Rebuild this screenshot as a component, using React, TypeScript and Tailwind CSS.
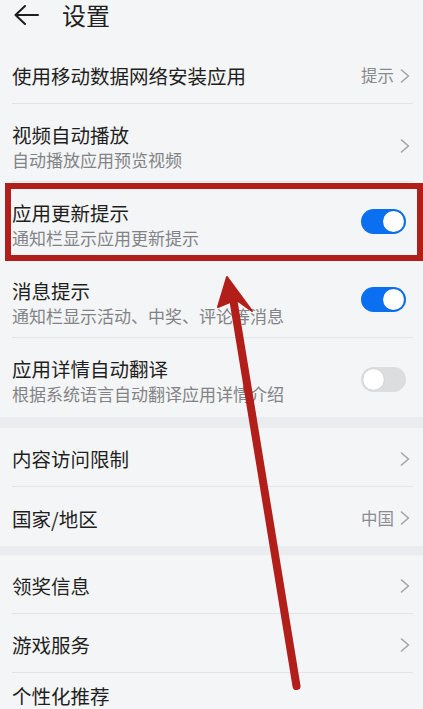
import type { ReactNode } from "react";

function Chevron() {
  return (
    <svg width="10" height="14" viewBox="0 0 10 14" fill="none" className="shrink-0">
      <path d="M1.5 1 L8.5 7 L1.5 13" stroke="#a3a4a6" strokeWidth={1.6} strokeLinecap="round" strokeLinejoin="round" />
    </svg>
  );
}

function Toggle({ on }: { on: boolean }) {
  return (
    <div
      className={`w-[45px] h-[25px] rounded-full p-[2px] flex shrink-0 ${
        on ? "bg-[#0a6ff0] justify-end" : "bg-[#dcdddf] justify-start"
      }`}
    >
      <div className="w-[21px] h-[21px] rounded-full bg-white shadow-[0_0_1px_rgba(0,0,0,0.25)]" />
    </div>
  );
}

function Row({
  title,
  sub,
  right,
  divider = true,
  tall = false,
}: {
  title: string;
  sub?: string;
  right?: ReactNode;
  divider?: boolean;
  tall?: boolean;
}) {
  return (
    <div
      className={`ml-3 mr-[10px] flex items-center justify-between ${
        tall ? "h-[78px]" : "h-[59px]"
      } ${divider ? "border-b border-[#e3e4e7]" : ""}`}
    >
      <div className={`flex flex-col ${tall ? "self-start pt-[18px]" : "pt-[3px]"}`}>
        <span className="text-[19.5px] leading-[25px] text-[#1f1f21]">{title}</span>
        {sub && <span className="mt-[2px] text-[17px] leading-[22px] text-[#828386]">{sub}</span>}
      </div>
      {right}
    </div>
  );
}

function Value({ text }: { text?: string }) {
  return (
    <div className="flex items-center gap-[6px] pr-[3px] pt-[3px]">
      {text && <span className="text-[16.5px] text-[#8a8b8e]">{text}</span>}
      <Chevron />
    </div>
  );
}

export default function App() {
  return (
    <div className="relative w-[423px] h-[709px] overflow-hidden bg-[#f4f5f7] font-['Noto_Sans_CJK_SC','Noto_Sans',sans-serif]">
      {/* Header */}
      <div className="h-[45px] pt-[1px]">
        <div className="flex items-center h-[28px] pl-[14px]">
          <svg width="25" height="20" viewBox="0 0 25 20" fill="none">
            <path d="M24 10 H1.5 M11 1 L1.5 10 L11 19" stroke="#1e1e20" strokeWidth={2} strokeLinecap="round" strokeLinejoin="round" />
          </svg>
          <span className="ml-[23px] text-[24px] leading-[28px] text-[#1f1f21]">设置</span>
        </div>
      </div>

      <Row title="使用移动数据网络安装应用" right={<Value text="提示" />} />
      <Row tall title="视频自动播放" sub="自动播放应用预览视频" right={<div className="pr-[3px] pt-[6px]"><Chevron /></div>} />
      <Row tall title="应用更新提示" sub="通知栏显示应用更新提示" right={<div className="pr-[7px] pt-[2px]"><Toggle on /></div>} />
      <Row tall title="消息提示" sub="通知栏显示活动、中奖、评论等消息" right={<div className="pr-[7px] pt-[2px]"><Toggle on /></div>} />
      <div className="h-[79px] ml-3 mr-[10px] flex items-center justify-between">
        <div className="flex flex-col self-start pt-[18px]">
          <span className="text-[19.5px] leading-[25px] text-[#1f1f21]">应用详情自动翻译</span>
          <span className="mt-[2px] text-[17px] leading-[22px] text-[#828386]">根据系统语言自动翻译应用详情介绍</span>
        </div>
        <div className="pr-[7px] pt-[4px]"><Toggle on={false} /></div>
      </div>

      <div className="h-[11px] bg-[#ebecef]" />

      <Row title="内容访问限制" right={<Value />} />
      <Row title="国家/地区" right={<Value text="中国" />} divider={false} />

      <div className="h-[9px] bg-[#ebecef]" />

      <Row title="领奖信息" right={<Value />} />
      <Row title="游戏服务" right={<Value />} />
      <div className="ml-3 mr-[10px] flex justify-between">
        <div className="pt-[10px]">
          <span className="text-[19.5px] leading-[25px] text-[#1f1f21]">个性化推荐</span>
        </div>
        <div className="pr-[7px] pt-[36px]"><Toggle on={false} /></div>
      </div>

      {/* Annotation: highlight box */}
      <div className="absolute left-[5px] top-[183px] w-[418px] h-[78px] border-[6px] border-[#b21e1a] pointer-events-none" />

      {/* Annotation: arrow */}
      <svg className="absolute inset-0 pointer-events-none" width="423" height="709" viewBox="0 0 423 709">
        <line x1="233" y1="298" x2="296.5" y2="686" stroke="#b21e1a" strokeWidth={8} strokeLinecap="round" />
        <polygon points="227,277 252,311 238,301 230,302 218,307" fill="#b21e1a" stroke="#b21e1a" strokeWidth={2} strokeLinejoin="round" />
      </svg>
    </div>
  );
}
